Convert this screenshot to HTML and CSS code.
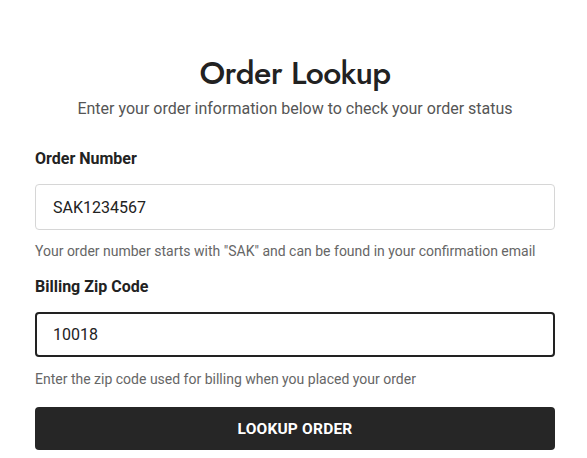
FILE: index.html
```html
<!DOCTYPE html>
<html>
<head>
<meta charset="utf-8">
<link rel="stylesheet" href="styles.css">
</head>
<body>
<div class="page">
  <h1 class="title">Order Lookup</h1>
  <p class="subtitle">Enter your order information below to check your order status</p>
  <form class="form">
    <div class="field">
      <label class="label">Order Number</label>
      <div class="input">SAK1234567</div>
      <div class="help">Your order number starts with "SAK" and can be found in your confirmation email</div>
    </div>
    <div class="field">
      <label class="label">Billing Zip Code</label>
      <div class="input focused">10018</div>
      <div class="help help-last">Enter the zip code used for billing when you placed your order</div>
    </div>
    <button type="button" class="btn">LOOKUP ORDER</button>
  </form>
</div>
</body>
</html>
```
FILE: styles.css
```css
* { box-sizing: border-box; }
html, body { margin: 0; padding: 0; background: #fff; }
body { font-family: Roboto, "Liberation Sans", sans-serif; color: #222; }
.page { width: 520px; margin-left: 35px; padding-top: 50px; }
.title {
  margin: 0;
  text-align: center;
  font-family: "Jost", "Futura", Lato, sans-serif;
  font-weight: 500;
  font-size: 32px;
  line-height: 46px;
  color: #222;
  letter-spacing: -0.6px;
}
.subtitle {
  margin: 3px 0 0;
  text-align: center;
  font-size: 16px;
  line-height: 20px;
  color: #555;
}
.form { margin-top: 30px; display: flex; flex-direction: column; }
.field { display: flex; flex-direction: column; margin-bottom: 18px; }
.label { font-size: 16px; font-weight: 700; line-height: 20px; color: #222; }
.input {
  margin-top: 15px;
  height: 46px;
  border: 1px solid #d6d6d6;
  border-radius: 4px;
  padding: 0 17px;
  display: flex; align-items: center;
  font-size: 16px; color: #222;
}
.input.focused { border: 2px solid #222; padding: 0 16px; height: 45px; margin-top: 15px; }
.help { margin-top: 13px; font-size: 14px; line-height: 16px; color: #666; }
.help-last { margin-top: 14px; }
.btn {
  margin-top: 2px;
  height: 43px;
  border: none;
  border-radius: 4px;
  background: #262626;
  color: #fff;
  font-family: Roboto, "Liberation Sans", sans-serif;
  font-weight: 700;
  font-size: 15.5px;
  letter-spacing: 0.2px;
}
```
